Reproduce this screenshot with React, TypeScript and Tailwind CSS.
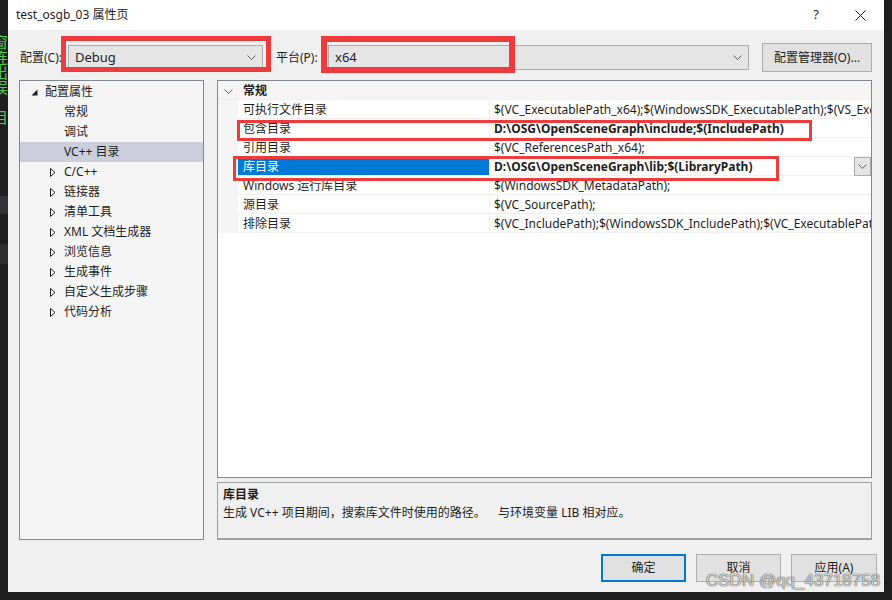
import React from 'react';

const ui = "font-['Noto_Sans','Noto_Sans_CJK_SC',sans-serif]";

const Chevron = () => (
    <svg width="9" height="5" viewBox="0 0 9 5">
        <path d="M0.5 0.5 L4.5 4.5 L8.5 0.5" stroke="#606060" fill="none" />
    </svg>
);

const Collapsed = () => (
    <svg width="6" height="9" viewBox="0 0 6 9">
        <path d="M0.5 0.5 L5 4.5 L0.5 8.5 Z" stroke="#1e1e1e" fill="white" />
    </svg>
);

const Expanded = () => (
    <svg width="7" height="7" viewBox="0 0 7 7">
        <path d="M6.5 0.5 L6.5 6.5 L0.5 6.5 Z" fill="#1e1e1e" />
    </svg>
);

const treeItems = [
    { label: '常规', arrow: false },
    { label: '调试', arrow: false },
    { label: 'VC++ 目录', arrow: false, selected: true },
    { label: 'C/C++', arrow: true },
    { label: '链接器', arrow: true },
    { label: '清单工具', arrow: true },
    { label: 'XML 文档生成器', arrow: true },
    { label: '浏览信息', arrow: true },
    { label: '生成事件', arrow: true },
    { label: '自定义生成步骤', arrow: true },
    { label: '代码分析', arrow: true },
];

const rows = [
    { name: '可执行文件目录', value: '$(VC_ExecutablePath_x64);$(WindowsSDK_ExecutablePath);$(VS_ExecutablePath);$(MSBuild_ExecutablePath)' },
    { name: '包含目录', value: 'D:\\OSG\\OpenSceneGraph\\include;$(IncludePath)', bold: true },
    { name: '引用目录', value: '$(VC_ReferencesPath_x64);' },
    { name: '库目录', value: 'D:\\OSG\\OpenSceneGraph\\lib;$(LibraryPath)', bold: true, selected: true },
    { name: 'Windows 运行库目录', value: '$(WindowsSDK_MetadataPath);' },
    { name: '源目录', value: '$(VC_SourcePath);' },
    { name: '排除目录', value: '$(VC_IncludePath);$(WindowsSDK_IncludePath);$(VC_ExecutablePath_x64);$(VC_LibraryPath_x64)' },
];

export default function App() {
    return (
        <div className={`relative w-[892px] h-[600px] bg-[#1e1e1e] flex overflow-hidden text-[12px] text-[#1e1e1e] ${ui}`}>
            {/* editor behind the dialog */}
            <div className="w-[8px] h-[592px] shrink-0 overflow-hidden flex flex-col text-[#4ec94e] text-[15px] leading-[16px]">
                <div className="h-[34px] shrink-0" />
                {['窗', '连', '出', '误', 'i;', '目'].map((c) => (
                    <div key={c} className="-ml-[7px] h-[15px] shrink-0 whitespace-nowrap">{c}</div>
                ))}
                <div className="h-[72px] shrink-0" />
                <div className="h-[18px] shrink-0 bg-[#333337]" />
                <div className="h-[30px] shrink-0" />
                <div className="h-[20px] shrink-0 bg-[#2d2d30]" />
            </div>

            <div className="w-[876px] h-[592px] shrink-0 overflow-hidden bg-[#f0f0f0] flex flex-col">
                {/* title bar */}
                <div className="h-[30px] shrink-0 bg-white flex items-center pl-[8px] pr-[18px]">
                    <span className="flex-1">test_osgb_03 属性页</span>
                    <span className="text-[13px] mr-[36px]">?</span>
                    <svg width="11" height="11" viewBox="0 0 11 11">
                        <path d="M0.5 0.5 L10.5 10.5 M10.5 0.5 L0.5 10.5" stroke="#1e1e1e" />
                    </svg>
                </div>

                {/* configuration row */}
                <div className="mt-[13px] h-[29px] shrink-0 flex items-center pl-[12px]">
                    <span className="w-[48px] shrink-0">配置(C):</span>
                    <div className="w-[195px] shrink-0 h-[25px] border border-[#adadad] bg-[#e5e5e5] flex items-center justify-between pl-[6px] pr-[6px] text-[13px]">
                        Debug
                        <Chevron />
                    </div>
                    <span className="ml-[13px] w-[52px] shrink-0">平台(P):</span>
                    <div className="w-[421px] shrink-0 h-[25px] border border-[#adadad] bg-[#e5e5e5] flex items-center justify-between pl-[6px] pr-[6px] text-[13px]">
                        x64
                        <Chevron />
                    </div>
                    <button className="ml-[13px] w-[110px] shrink-0 h-[29px] border border-[#adadad] bg-[#e1e1e1] text-[12px]">
                        配置管理器(O)...
                    </button>
                </div>

                {/* main */}
                <div className="mt-[8px] h-[460px] shrink-0 flex pl-[11px] pr-[12px] gap-[13px]">
                    <div className="w-[185px] shrink-0 h-full border border-[#828790] bg-[#f5f5f5] pt-[1px]">
                        <div className="h-[20px] flex items-center">
                            <div className="w-[25px] shrink-0 flex justify-end pr-[7px]">
                                <Expanded />
                            </div>
                            <span className="whitespace-nowrap">配置属性</span>
                        </div>
                        {treeItems.map((t) => (
                            <div key={t.label} className={`h-[20px] flex items-center ${t.selected ? 'bg-[#cccedb]' : ''}`}>
                                <div className="w-[44px] shrink-0 flex justify-end pr-[8px]">{t.arrow && <Collapsed />}</div>
                                <span className="whitespace-nowrap">{t.label}</span>
                            </div>
                        ))}
                    </div>

                    <div className="flex-1 min-w-0 flex flex-col gap-[4px]">
                        <div className="h-[398px] border border-[#828790] bg-white overflow-hidden">
                            <div className="h-[19px] flex items-center bg-[#f5f5f5] border-b border-[#f0f0f0] pt-[2px]">
                                <div className="w-[20px] shrink-0 flex justify-center">
                                    <Chevron />
                                </div>
                                <span className="ml-[5px] font-bold">常规</span>
                            </div>
                            {rows.map((r) => (
                                <div key={r.name} className="h-[19px] flex">
                                    <div className="w-[20px] shrink-0 bg-[#f5f5f5]" />
                                    <div
                                        className={`w-[252px] shrink-0 flex items-center pl-[5px] pt-[2px] border-r border-b border-[#f0f0f0] whitespace-nowrap ${
                                            r.selected ? 'bg-[#0078d7] text-white' : ''
                                        }`}
                                    >
                                        {r.name}
                                    </div>
                                    <div className="flex-1 min-w-0 flex items-center border-b border-[#f0f0f0]">
                                        <span className={`flex-1 min-w-0 pl-[4px] pt-[2px] whitespace-nowrap overflow-hidden ${r.bold ? 'font-bold' : ''}`}>
                                            {r.value}
                                        </span>
                                        {r.selected && (
                                            <div className="w-[17px] shrink-0 h-[19px] border border-[#acacac] bg-[#e5e5e5] flex items-center justify-center">
                                                <Chevron />
                                            </div>
                                        )}
                                    </div>
                                </div>
                            ))}
                        </div>
                        <div className="h-[58px] border border-[#a0a0a0] border-b-2 bg-[#f0f0f0] pl-[5px] pt-[3px]">
                            <div className="h-[18px] flex items-center font-bold">库目录</div>
                            <div className="h-[18px] flex items-center whitespace-pre">
                                生成 VC++ 项目期间，搜索库文件时使用的路径。    与环境变量 LIB 相对应。
                            </div>
                        </div>
                    </div>
                </div>

                {/* buttons */}
                <div className="mt-[14px] h-[28px] shrink-0 flex justify-end gap-[10px] pr-[7px]">
                    <button className="w-[85px] h-[28px] border-2 border-[#0078d7] bg-[#e1e1e1]">确定</button>
                    <button className="w-[85px] h-[28px] border border-[#adadad] bg-[#e1e1e1]">取消</button>
                    <button className="w-[86px] h-[28px] border border-[#adadad] bg-[#e1e1e1]">应用(A)</button>
                </div>
            </div>
            <div className="w-[8px] h-[592px] shrink-0" />

            {/* red annotation boxes */}
            <div className="absolute left-[61px] top-[36px] w-[210px] h-[36px] border-[5px] border-[#ef3b3b]" />
            <div className="absolute left-[321px] top-[36px] w-[194px] h-[37px] border-[6px] border-[#ef3b3b]" />
            <div className="absolute left-[237px] top-[120px] w-[575px] h-[21px] border-[3px] border-[#ef3b3b]" />
            <div className="absolute left-[233px] top-[156px] w-[546px] h-[25px] border-[3px] border-[#ef3b3b]" />

            {/* watermark */}
            <div className="absolute left-[706px] top-[571px] text-[17px] leading-[20px] font-['Liberation_Sans',sans-serif] text-[rgba(255,255,255,0.75)] [text-shadow:0_0_1px_#444,0_0_1px_#444]">
                CSDN @qq_43718758
            </div>
        </div>
    );
}
